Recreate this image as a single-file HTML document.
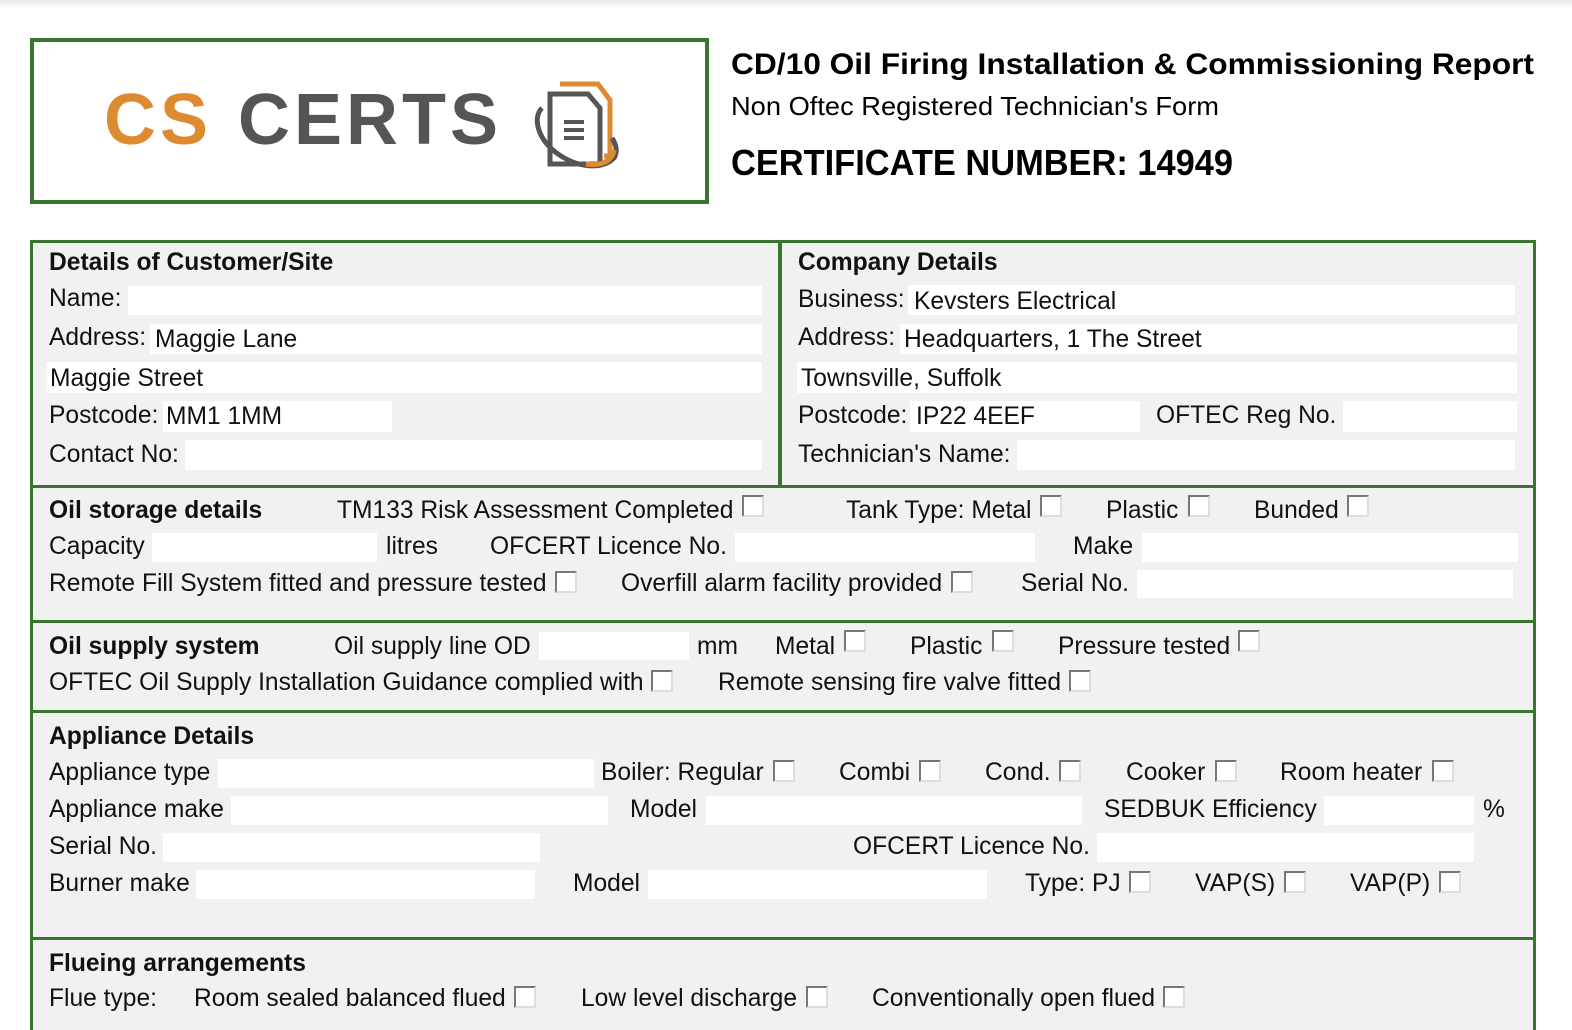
<!DOCTYPE html>
<html><head><meta charset="utf-8">
<style>
html,body{margin:0;padding:0;background:#fff;}
body{width:1572px;height:1012px;position:relative;overflow:hidden;font-family:"Liberation Sans",Arial,sans-serif;color:#111;}
.t{position:absolute;font-size:24.6px;line-height:32px;white-space:nowrap;}
.b{font-weight:bold;}
.f{position:absolute;background:#fff;height:29px;}
.c{position:absolute;width:18px;height:18px;background:#fff;border-top:2px solid #777;border-left:2px solid #777;border-right:2px solid #ddd;border-bottom:2px solid #ddd;}
.sec{position:absolute;left:30px;width:1500px;background:#f1f1f1;border-left:3px solid #38762f;border-right:3px solid #38762f;border-top:3px solid #38762f;}
</style></head><body>
<div style="position:absolute;left:0;top:0;width:1572px;height:8px;background:linear-gradient(#e8e8e8,#fff)"></div>
<div style="position:absolute;left:30px;top:38px;width:671px;height:158px;border:4px solid #38762f;background:#fff"></div>
<div style="position:absolute;left:104px;top:76px;font-size:72px;font-weight:bold;letter-spacing:4px;line-height:88px;white-space:nowrap;color:#dd8a30">CS</div>
<div style="position:absolute;left:238px;top:76px;font-size:72px;font-weight:bold;letter-spacing:4px;line-height:88px;white-space:nowrap;color:#555">CERTS</div>
<svg style="position:absolute;left:528px;top:78px" width="96" height="92" viewBox="0 0 96 92">
<path d="M32 6 L70 6 L82 22 L82 78 L76 78" fill="none" stroke="#dd8a30" stroke-width="5"/>
<path d="M22 16 L60 16 L72 30 L72 86 L22 86 Z" fill="#fff" stroke="#555" stroke-width="5"/>
<path d="M14 30 C4 40 10 62 30 76 C50 90 74 92 86 80 C90 74 88 66 84 60" fill="none" stroke="#555" stroke-width="5"/>
<path d="M58 86 C72 88 84 84 86 72" fill="none" stroke="#dd8a30" stroke-width="5"/>
<path d="M36 44 H56 M36 52 H56 M36 60 H56" stroke="#555" stroke-width="4"/>
</svg>
<svg style="position:absolute;left:0;top:0" width="1572" height="200">
<text x="731" y="74" font-family="Liberation Sans" font-weight="bold" font-size="30" textLength="803" lengthAdjust="spacingAndGlyphs" fill="#000">CD/10 Oil Firing Installation &amp; Commissioning Report</text>
<text x="731" y="115" font-family="Liberation Sans" font-size="26" textLength="488" lengthAdjust="spacingAndGlyphs" fill="#000">Non Oftec Registered Technician's Form</text>
<text x="731" y="175" font-family="Liberation Sans" font-weight="bold" font-size="36" textLength="502" lengthAdjust="spacingAndGlyphs" fill="#000">CERTIFICATE NUMBER:  14949</text>
</svg>

<div class="sec" style="top:240px;height:245px"></div>
<div style="position:absolute;left:778px;top:240px;width:4px;height:248px;background:#38762f"></div>
<div class="sec" style="top:485px;height:135px"></div>
<div class="sec" style="top:620px;height:90px"></div>
<div class="sec" style="top:710px;height:227px"></div>
<div class="sec" style="top:937px;height:90px"></div>

<div class="t b" style="left:49px;top:247px">Details of Customer/Site</div>
<div class="t" style="left:49px;top:283px">Name:</div><div class="f" style="left:128px;top:286px;width:634px"></div>
<div class="t" style="left:49px;top:322px">Address:</div><div class="f" style="left:150px;top:324px;width:612px;height:30px"></div><div class="t" style="left:155px;top:324px">Maggie Lane</div>
<div class="f" style="left:46px;top:362px;width:716px;height:31px"></div><div class="t" style="left:50px;top:363px">Maggie Street</div>
<div class="t" style="left:49px;top:400px">Postcode:</div><div class="f" style="left:163px;top:401px;width:229px;height:31px"></div><div class="t" style="left:166px;top:401px">MM1 1MM</div>
<div class="t" style="left:49px;top:439px">Contact No:</div><div class="f" style="left:185px;top:440px;width:577px;height:30px"></div>

<div class="t b" style="left:798px;top:247px">Company Details</div>
<div class="t" style="left:798px;top:284px">Business:</div><div class="f" style="left:908px;top:285px;width:607px;height:30px"></div><div class="t" style="left:914px;top:286px">Kevsters Electrical</div>
<div class="t" style="left:798px;top:322px">Address:</div><div class="f" style="left:900px;top:324px;width:617px;height:30px"></div><div class="t" style="left:904px;top:324px">Headquarters, 1 The Street</div>
<div class="f" style="left:797px;top:362px;width:720px;height:31px"></div><div class="t" style="left:801px;top:363px">Townsville, Suffolk</div>
<div class="t" style="left:798px;top:400px">Postcode:</div><div class="f" style="left:910px;top:401px;width:230px;height:31px"></div><div class="t" style="left:916px;top:401px">IP22 4EEF</div>
<div class="t" style="left:1156px;top:400px">OFTEC Reg No.</div><div class="f" style="left:1343px;top:401px;width:174px;height:31px"></div>
<div class="t" style="left:798px;top:439px">Technician's Name:</div><div class="f" style="left:1017px;top:440px;width:498px;height:30px"></div>

<div class="t b" style="left:49px;top:495px">Oil storage details</div>
<div class="t" style="left:337px;top:495px">TM133 Risk Assessment Completed</div><div class="c" style="left:742px;top:495px"></div>
<div class="t" style="left:846px;top:495px">Tank Type: Metal</div><div class="c" style="left:1040px;top:495px"></div>
<div class="t" style="left:1106px;top:495px">Plastic</div><div class="c" style="left:1188px;top:495px"></div>
<div class="t" style="left:1254px;top:495px">Bunded</div><div class="c" style="left:1347px;top:495px"></div>
<div class="t" style="left:49px;top:531px">Capacity</div><div class="f" style="left:152px;top:533px;width:225px"></div>
<div class="t" style="left:386px;top:531px">litres</div>
<div class="t" style="left:490px;top:531px">OFCERT Licence No.</div><div class="f" style="left:735px;top:533px;width:300px"></div>
<div class="t" style="left:1073px;top:531px">Make</div><div class="f" style="left:1142px;top:533px;width:376px"></div>
<div class="t" style="left:49px;top:568px">Remote Fill System fitted and pressure tested</div><div class="c" style="left:555px;top:571px"></div>
<div class="t" style="left:621px;top:568px">Overfill alarm facility provided</div><div class="c" style="left:951px;top:571px"></div>
<div class="t" style="left:1021px;top:568px">Serial No.</div><div class="f" style="left:1137px;top:570px;width:376px;height:28px"></div>

<div class="t b" style="left:49px;top:631px">Oil supply system</div>
<div class="t" style="left:334px;top:631px">Oil supply line OD</div><div class="f" style="left:539px;top:632px;width:150px;height:28px"></div>
<div class="t" style="left:697px;top:631px">mm</div>
<div class="t" style="left:775px;top:631px">Metal</div><div class="c" style="left:844px;top:630px"></div>
<div class="t" style="left:910px;top:631px">Plastic</div><div class="c" style="left:992px;top:630px"></div>
<div class="t" style="left:1058px;top:631px">Pressure tested</div><div class="c" style="left:1238px;top:630px"></div>
<div class="t" style="left:49px;top:667px">OFTEC Oil Supply Installation Guidance complied with</div><div class="c" style="left:651px;top:670px"></div>
<div class="t" style="left:718px;top:667px">Remote sensing fire valve fitted</div><div class="c" style="left:1069px;top:670px"></div>

<div class="t b" style="left:49px;top:721px">Appliance Details</div>
<div class="t" style="left:49px;top:757px">Appliance type</div><div class="f" style="left:218px;top:759px;width:376px"></div>
<div class="t" style="left:601px;top:757px">Boiler: Regular</div><div class="c" style="left:773px;top:760px"></div>
<div class="t" style="left:839px;top:757px">Combi</div><div class="c" style="left:919px;top:760px"></div>
<div class="t" style="left:985px;top:757px">Cond.</div><div class="c" style="left:1059px;top:760px"></div>
<div class="t" style="left:1126px;top:757px">Cooker</div><div class="c" style="left:1215px;top:760px"></div>
<div class="t" style="left:1280px;top:757px">Room heater</div><div class="c" style="left:1432px;top:760px"></div>
<div class="t" style="left:49px;top:794px">Appliance make</div><div class="f" style="left:231px;top:796px;width:377px"></div>
<div class="t" style="left:630px;top:794px">Model</div><div class="f" style="left:706px;top:796px;width:376px"></div>
<div class="t" style="left:1104px;top:794px">SEDBUK Efficiency</div><div class="f" style="left:1324px;top:796px;width:150px"></div>
<div class="t" style="left:1483px;top:794px">%</div>
<div class="t" style="left:49px;top:831px">Serial No.</div><div class="f" style="left:163px;top:833px;width:377px"></div>
<div class="t" style="left:853px;top:831px">OFCERT Licence No.</div><div class="f" style="left:1097px;top:833px;width:377px"></div>
<div class="t" style="left:49px;top:868px">Burner make</div><div class="f" style="left:196px;top:870px;width:339px"></div>
<div class="t" style="left:573px;top:868px">Model</div><div class="f" style="left:648px;top:870px;width:339px"></div>
<div class="t" style="left:1025px;top:868px">Type: PJ</div><div class="c" style="left:1129px;top:871px"></div>
<div class="t" style="left:1195px;top:868px">VAP(S)</div><div class="c" style="left:1284px;top:871px"></div>
<div class="t" style="left:1350px;top:868px">VAP(P)</div><div class="c" style="left:1439px;top:871px"></div>

<div class="t b" style="left:49px;top:948px">Flueing arrangements</div>
<div class="t" style="left:49px;top:983px">Flue type:</div>
<div class="t" style="left:194px;top:983px">Room sealed balanced flued</div><div class="c" style="left:514px;top:986px"></div>
<div class="t" style="left:581px;top:983px">Low level discharge</div><div class="c" style="left:806px;top:986px"></div>
<div class="t" style="left:872px;top:983px">Conventionally open flued</div><div class="c" style="left:1163px;top:986px"></div>
</body></html>
